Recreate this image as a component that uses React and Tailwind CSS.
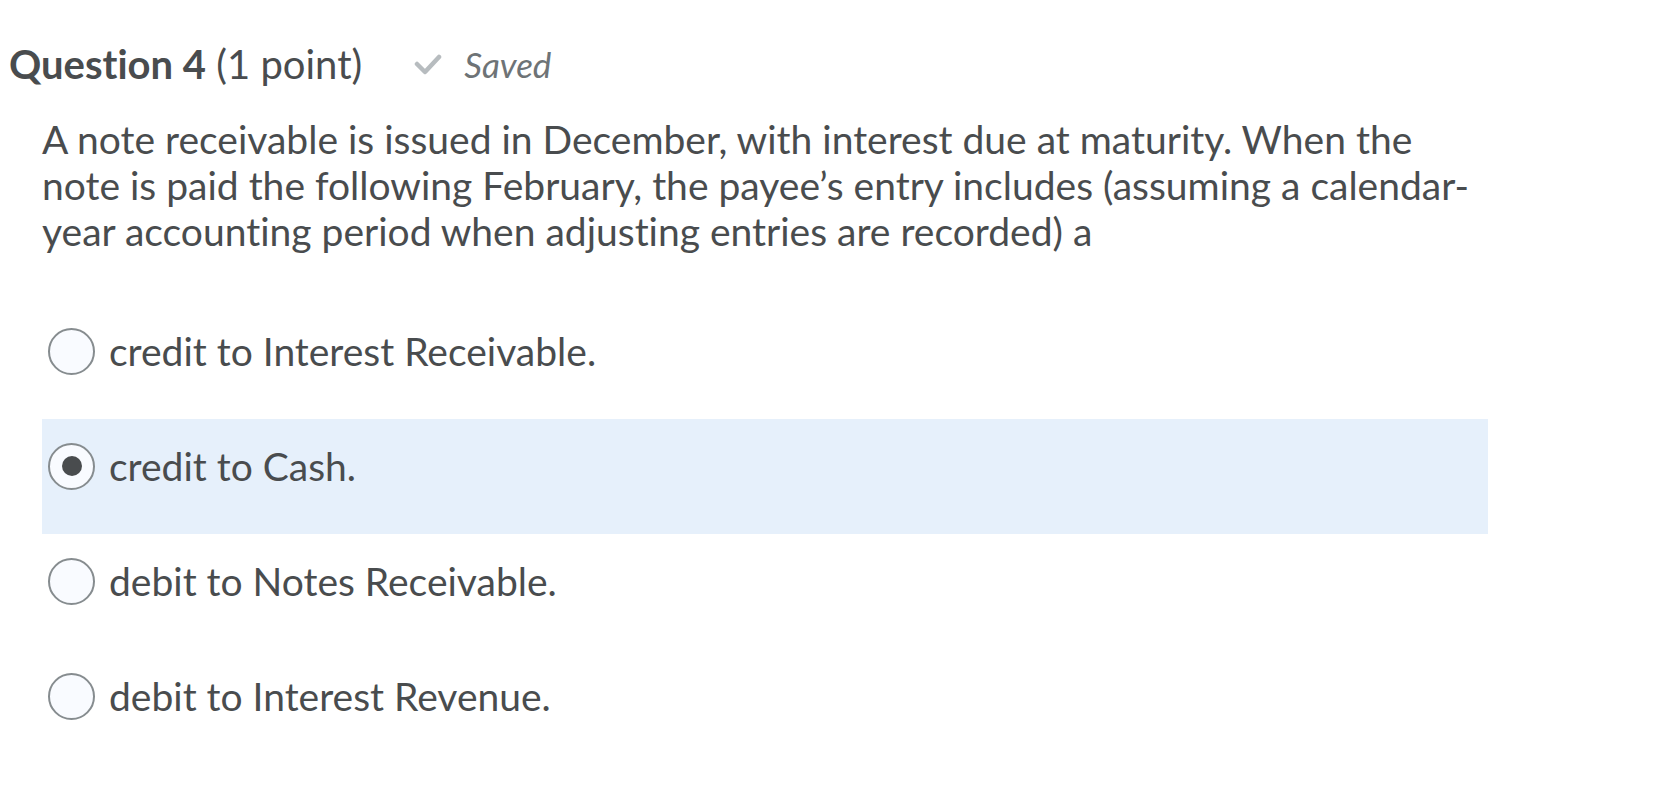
import React from "react";

const options = [
  { label: "credit to Interest Receivable.", checked: false },
  { label: "credit to Cash.", checked: true },
  { label: "debit to Notes Receivable.", checked: false },
  { label: "debit to Interest Revenue.", checked: false },
];

function Radio({ checked }) {
  return (
    <span className="flex h-[47px] w-[47px] shrink-0 items-center justify-center rounded-full border-2 border-[#868c8f] bg-[#f9fbff]">
      {checked && <span className="h-[20px] w-[20px] rounded-full bg-[#494c4e]" />}
    </span>
  );
}

export default function App() {
  return (
    <div className="min-h-[794px] bg-white font-['Lato',sans-serif] text-[#494c4e] [font-variant-ligatures:none]">
      <header className="flex items-center pl-[9px] pt-[38px]">
        <h1 className="text-[40px] leading-[50px]">
          <span className="font-bold">Question 4</span> (1 point)
        </h1>
        <span className="ml-[52px] flex items-center gap-[22px] text-[#6e7376]">
          <svg width="28" height="22" viewBox="0 0 28 22" fill="none">
            <path d="M3 11 L11 19 L25 4" stroke="#b7bcbf" strokeWidth="4.5" strokeLinecap="round" strokeLinejoin="round" />
          </svg>
          <span className="text-[35px] italic">Saved</span>
        </span>
      </header>

      <div className="ml-[42px] w-[1446px]">
        <p className="mt-[25px] w-[1440px] text-[39px] leading-[46px]">
          A note receivable is issued in December, with interest due at maturity. When the note is paid the following February, the payee’s entry includes (assuming a calendar-year accounting period when adjusting entries are recorded) a
        </p>

        <div className="mt-[50px]">
          {options.map((o) => (
            <label
              key={o.label}
              className={`flex h-[115px] items-start pl-[6px] pt-[24px] ${o.checked ? "bg-[#e6f0fb]" : ""}`}
            >
              <Radio checked={o.checked} />
              <span className="ml-[14px] text-[39px] leading-[46px]">{o.label}</span>
            </label>
          ))}
        </div>
      </div>
    </div>
  );
}
